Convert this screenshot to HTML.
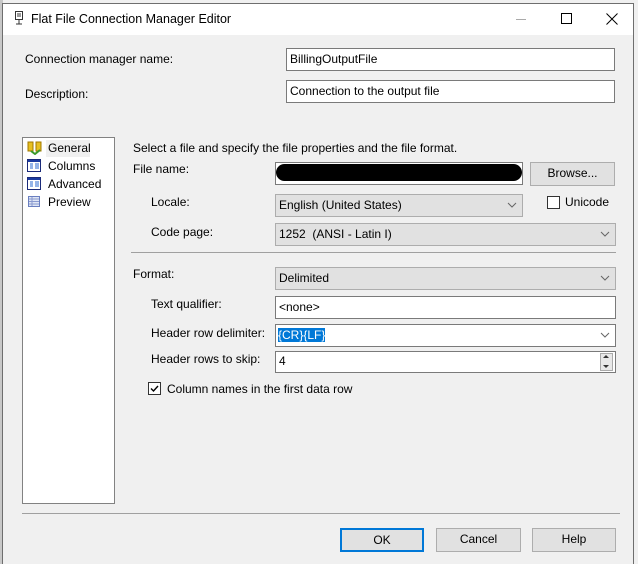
<!DOCTYPE html>
<html><head><meta charset="utf-8"><style>
*{box-sizing:border-box;margin:0;padding:0}
body{width:638px;height:564px;background:#f0f0f0;font-family:"Liberation Sans",sans-serif;font-size:12px;color:#000;position:relative;overflow:hidden}
.a{position:absolute}
.lbl{position:absolute;line-height:14px;white-space:nowrap}
.in{position:absolute;background:#fff;border:1px solid #7a7a7a;height:23px;padding:3px 3px;line-height:15px;white-space:nowrap}
.cb{position:absolute;background:#e1e1e1;border:1px solid #adadad;height:23px;padding:3px 3px;line-height:15px}
.chev{position:absolute;right:5px;top:6px;width:10px;height:8px}
.btn{position:absolute;background:#e1e1e1;border:1px solid #adadad;height:24px;text-align:center;line-height:21px}
.chk{position:absolute;width:13px;height:13px;border:1px solid #333;background:#fff}
</style></head><body>
<div class="a" style="left:0;top:0;width:3px;height:564px;background:#c8c8c8"></div>
<div class="a" style="left:2px;top:3px;width:632px;height:561px;border:1px solid #6e6e6e;border-bottom:none;background:#f0f0f0"></div>
<div class="a" style="left:3px;top:4px;width:630px;height:31px;background:#fff"></div>
<svg class="a" style="left:14px;top:11px" width="10" height="14" viewBox="0 0 10 14"><rect x="1.5" y="0.5" width="7" height="8" fill="none" stroke="#333"/><path d="M3 3h4M3 5h4M5 9v4M2 13h6" stroke="#333"/></svg>
<div class="lbl" style="left:31px;top:12px;font-size:12.5px">Flat File Connection Manager Editor</div>
<div class="a" style="left:516px;top:19px;width:10px;height:1px;background:#aaa"></div>
<div class="a" style="left:561px;top:13px;width:11px;height:11px;border:1px solid #000"></div>
<svg class="a" style="left:606px;top:13px" width="12" height="12"><path d="M0.5 0.5L11.5 11.5M11.5 0.5L0.5 11.5" stroke="#000"/></svg>

<div class="lbl" style="left:25px;top:52px">Connection manager name:</div>
<div class="in" style="left:286px;top:48px;width:329px">BillingOutputFile</div>
<div class="lbl" style="left:25px;top:87px">Description:</div>
<div class="in" style="left:286px;top:80px;width:329px">Connection to the output file</div>

<div class="a" style="left:22px;top:137px;width:93px;height:367px;background:#fff;border:1px solid #828282"></div>
<div class="a" style="left:46px;top:140px;width:44px;height:17px;background:#f0f0f0"></div>
<svg class="a" style="left:27px;top:141px" width="16" height="14"><rect x="1" y="1" width="5" height="9" fill="#e8c020" stroke="#a07800"/><rect x="9" y="1" width="5" height="9" fill="#e8c020" stroke="#a07800"/><path d="M4 10l4 3 5-4" stroke="#3a9a2a" stroke-width="2" fill="none"/></svg>
<svg class="a" style="left:27px;top:159px" width="14" height="13"><rect x="0.5" y="0.5" width="13" height="12" fill="#fff" stroke="#1a2a7a"/><rect x="1" y="1" width="12" height="2" fill="#1a3aa0"/><path d="M3 5h3M3 7h3M3 9h3M8 5h4M8 7h4M8 9h4" stroke="#2a6ad0"/></svg>
<svg class="a" style="left:27px;top:177px" width="14" height="13"><rect x="0.5" y="0.5" width="13" height="12" fill="#fff" stroke="#1a2a7a"/><rect x="1" y="1" width="12" height="2" fill="#1a3aa0"/><path d="M3 5h3M3 7h3M3 9h3M8 5h4M8 7h4M8 9h4" stroke="#2a6ad0"/></svg>
<svg class="a" style="left:28px;top:196px" width="12" height="11"><rect x="0.5" y="0.5" width="11" height="10" fill="#dfe6f5" stroke="#6a7fc0"/><path d="M1 3h10M1 5.5h10M1 8h10M4 1v9" stroke="#8a9ad0"/></svg>
<div class="lbl" style="left:48px;top:141px">General</div>
<div class="lbl" style="left:48px;top:159px">Columns</div>
<div class="lbl" style="left:48px;top:177px">Advanced</div>
<div class="lbl" style="left:48px;top:195px">Preview</div>

<div class="lbl" style="left:133px;top:141px">Select a file and specify the file properties and the file format.</div>
<div class="lbl" style="left:133px;top:162px">File name:</div>
<div class="in" style="left:275px;top:162px;width:248px"></div>
<div class="a" style="left:276px;top:164px;width:246px;height:17px;background:#000;border-radius:9px"></div>
<div class="btn" style="left:530px;top:162px;width:85px">Browse...</div>

<div class="lbl" style="left:151px;top:195px">Locale:</div>
<div class="cb" style="left:275px;top:194px;width:248px">English (United States)<svg class="chev" viewBox="0 0 10 8"><path d="M1 2l4 4 4-4" stroke="#666" fill="none"/></svg></div>
<div class="chk" style="left:547px;top:196px"></div>
<div class="lbl" style="left:565px;top:195px">Unicode</div>

<div class="lbl" style="left:151px;top:225px">Code page:</div>
<div class="cb" style="left:275px;top:223px;width:341px">1252&nbsp; (ANSI - Latin I)<svg class="chev" viewBox="0 0 10 8"><path d="M1 2l4 4 4-4" stroke="#666" fill="none"/></svg></div>

<div class="a" style="left:131px;top:252px;width:485px;height:1px;background:#a0a0a0"></div>

<div class="lbl" style="left:133px;top:267px">Format:</div>
<div class="cb" style="left:275px;top:267px;width:341px">Delimited<svg class="chev" viewBox="0 0 10 8"><path d="M1 2l4 4 4-4" stroke="#666" fill="none"/></svg></div>
<div class="lbl" style="left:151px;top:297px">Text qualifier:</div>
<div class="in" style="left:275px;top:296px;width:341px">&lt;none&gt;</div>
<div class="lbl" style="left:151px;top:326px">Header row delimiter:</div>
<div class="in" style="left:275px;top:324px;width:341px;padding-left:2px"><span style="background:#0078d7;color:#fff">{CR}{LF}</span><svg class="chev" viewBox="0 0 10 8"><path d="M1 2l4 4 4-4" stroke="#666" fill="none"/></svg></div>
<div class="lbl" style="left:151px;top:352px">Header rows to skip:</div>
<div class="in" style="left:275px;top:351px;width:341px;height:22px;padding-top:2px">4</div>
<div class="a" style="left:600px;top:353px;width:13px;height:18px;border:1px solid #aaa;background:#e8e8e8"></div>
<div class="a" style="left:603px;top:355px;width:0;height:0;border-left:3px solid transparent;border-right:3px solid transparent;border-bottom:3px solid #333"></div>
<div class="a" style="left:603px;top:365px;width:0;height:0;border-left:3px solid transparent;border-right:3px solid transparent;border-top:3px solid #333"></div>

<div class="chk" style="left:148px;top:382px"></div>
<svg class="a" style="left:149px;top:383px" width="11" height="11"><path d="M2 5.5l2.5 2.5 4.5-5" stroke="#000" stroke-width="1.4" fill="none"/></svg>
<div class="lbl" style="left:167px;top:382px">Column names in the first data row</div>

<div class="a" style="left:22px;top:513px;width:598px;height:1px;background:#a0a0a0"></div>
<div class="btn" style="left:340px;top:528px;width:84px;border:2px solid #0078d7;line-height:20px">OK</div>
<div class="btn" style="left:436px;top:528px;width:85px">Cancel</div>
<div class="btn" style="left:532px;top:528px;width:84px">Help</div>
</body></html>
